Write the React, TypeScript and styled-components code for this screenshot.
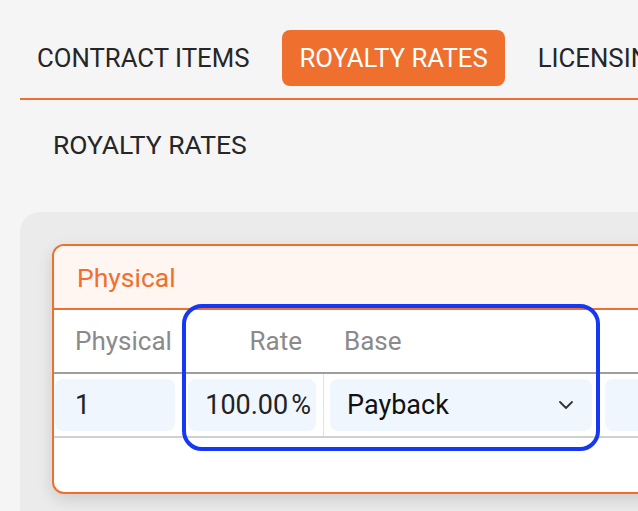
import styled, { createGlobalStyle } from "styled-components";

const GlobalStyle = createGlobalStyle`
  html, body {
    margin: 0;
    padding: 0;
    background: #f5f5f5;
    font-family: Roboto, "Liberation Sans", Arial, sans-serif;
    overflow: hidden;
  }
`;

const ORANGE = "#ef6f2e";

const Page = styled.div`
  width: 638px;
  height: 511px;
  overflow: hidden;
  background: #f5f5f5;
`;

const TabBar = styled.div`
  display: flex;
  gap: 16px;
  margin-left: 20px;
  padding-top: 30px;
  padding-bottom: 12px;
  border-bottom: 2px solid ${ORANGE};
  white-space: nowrap;
  overflow: hidden;
`;

const Tab = styled.div<{ $active?: boolean }>`
  flex-shrink: 0;
  height: 56px;
  display: flex;
  align-items: center;
  padding: 0 17px;
  border-radius: 8px;
  font-size: 25.75px;
  color: ${(p) => (p.$active ? "#ffffff" : "#262626")};
  background: ${(p) => (p.$active ? ORANGE : "transparent")};
`;

const Subtitle = styled.div`
  margin: 30px 0 0 53px;
  height: 30px;
  line-height: 30px;
  font-size: 26.5px;
  color: #262626;
`;

const Panel = styled.div`
  margin: 52px 0 0 20px;
  padding: 32px 0 0 32px;
  background: #ebebeb;
  border-radius: 20px 0 0 0;
  height: 400px;
`;

const Card = styled.div`
  position: relative;
  width: 700px;
  background: #ffffff;
  border: 2px solid ${ORANGE};
  border-radius: 12px;
  box-shadow: 0 6px 16px rgba(0, 0, 0, 0.13);
`;

const CardHeader = styled.div`
  height: 62px;
  display: flex;
  align-items: center;
  padding-left: 23px;
  background: #fff5f1;
  border-bottom: 2px solid ${ORANGE};
  border-radius: 10px 10px 0 0;
  font-size: 26.5px;
  color: ${ORANGE};
`;

const Row = styled.div<{ $line: string }>`
  display: grid;
  grid-template-columns: 128px 141px 276px 200px;
  height: 62px;
  border-bottom: 2px solid ${(p) => p.$line};
`;

const HeadCell = styled.div<{ $right?: boolean }>`
  display: flex;
  align-items: center;
  justify-content: ${(p) => (p.$right ? "flex-end" : "flex-start")};
  padding: 0 21px 0 21px;
  font-size: 26px;
  color: #8a8a8a;
`;

const Cell = styled.div<{ $divider?: boolean; $first?: boolean }>`
  display: flex;
  align-items: center;
  padding: 0 7px 0 ${(p) => (p.$first ? "1px" : "6px")};
  border-left: ${(p) => (p.$divider ? "1.5px solid #e2e2e2" : "none")};
`;

const Input = styled.div<{ $right?: boolean }>`
  flex: 1;
  height: 52px;
  display: flex;
  align-items: center;
  justify-content: ${(p) => (p.$right ? "flex-end" : "flex-start")};
  padding: ${(p) => (p.$right ? "0 5px 0 0" : "0 0 0 20px")};
  background: #f0f6fd;
  border-radius: 8px;
  font-size: 27px;
  color: #222222;
`;

const Unit = styled.span`
  margin-left: 3px;
`;

const Select = styled(Input)`
  justify-content: space-between;
  padding: 0 19px 0 17px;
  color: #111111;
`;

const Empty = styled.div`
  height: 54px;
`;

const Highlight = styled.div`
  position: absolute;
  left: 128px;
  top: 58px;
  width: 418px;
  height: 147px;
  box-sizing: border-box;
  border: 4px solid #1538f5;
  border-radius: 20px;
  pointer-events: none;
`;

const Chevron = () => (
  <svg width="14" height="8" viewBox="0 0 14 8" fill="none">
    <polyline
      points="1,1 7,7 13,1"
      stroke="#333"
      strokeWidth="1.8"
      strokeLinecap="round"
      strokeLinejoin="round"
    />
  </svg>
);

const App = () => {
  return (
    <Page>
      <GlobalStyle />
      <TabBar>
        <Tab>CONTRACT ITEMS</Tab>
        <Tab $active>ROYALTY RATES</Tab>
        <Tab>LICENSING</Tab>
      </TabBar>
      <Subtitle>ROYALTY RATES</Subtitle>
      <Panel>
        <Card>
          <CardHeader>Physical</CardHeader>
          <Row $line="#9e9e9e">
            <HeadCell>Physical</HeadCell>
            <HeadCell $right>Rate</HeadCell>
            <HeadCell>Base</HeadCell>
            <HeadCell />
          </Row>
          <Row $line="#d0d0d0">
            <Cell $first>
              <Input>1</Input>
            </Cell>
            <Cell>
              <Input $right>
                100.00<Unit>%</Unit>
              </Input>
            </Cell>
            <Cell $divider>
              <Select>
                Payback
                <Chevron />
              </Select>
            </Cell>
            <Cell>
              <Input />
            </Cell>
          </Row>
          <Empty />
          <Highlight />
        </Card>
      </Panel>
    </Page>
  );
};

export default App;
